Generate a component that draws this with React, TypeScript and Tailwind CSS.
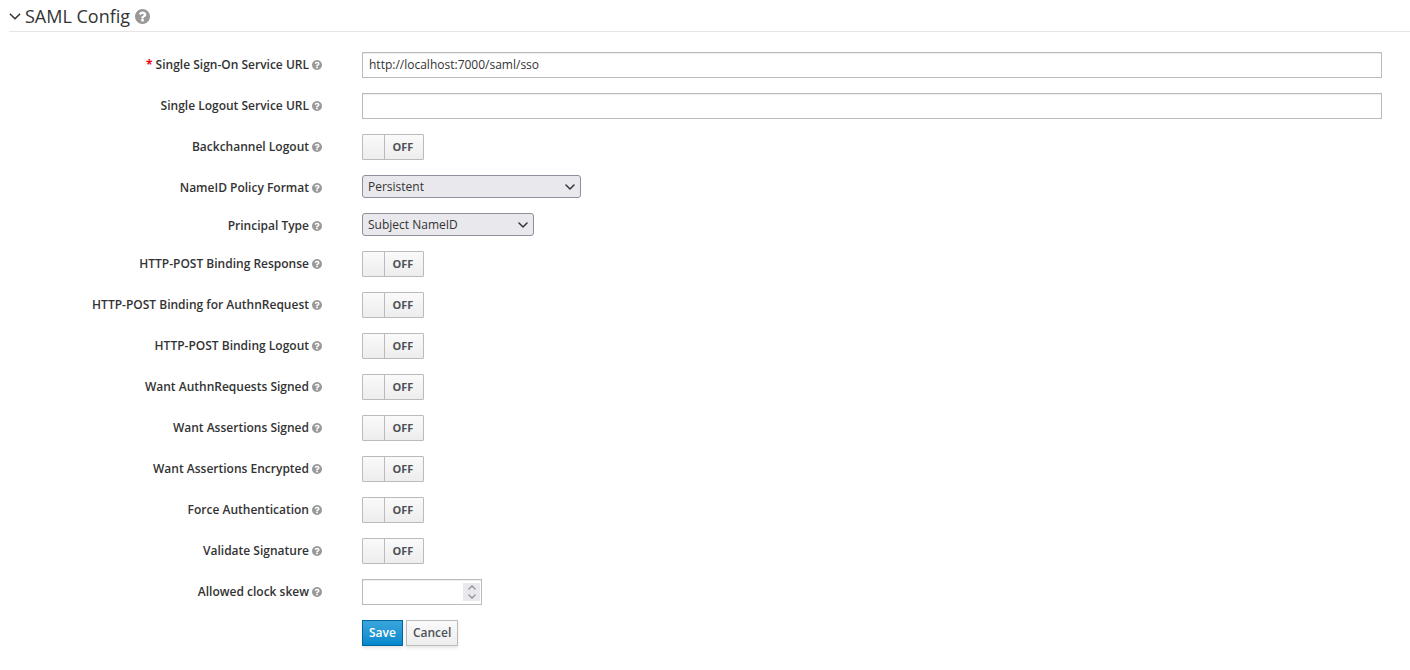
import { useState } from 'react'
import type { ReactNode } from 'react'

const SWITCHES = [
  { id: 'postBindingResponse', label: 'HTTP-POST Binding Response' },
  { id: 'postBindingAuthnRequest', label: 'HTTP-POST Binding for AuthnRequest' },
  { id: 'postBindingLogout', label: 'HTTP-POST Binding Logout' },
  { id: 'wantAuthnRequestsSigned', label: 'Want AuthnRequests Signed' },
  { id: 'wantAssertionsSigned', label: 'Want Assertions Signed' },
  { id: 'wantAssertionsEncrypted', label: 'Want Assertions Encrypted' },
  { id: 'forceAuthentication', label: 'Force Authentication' },
  { id: 'validateSignature', label: 'Validate Signature' },
]

const NAME_ID_FORMATS = ['Persistent', 'Transient', 'Email', 'Kerberos', 'X.509 Subject Name', 'Unspecified']
const PRINCIPAL_TYPES = ['Subject NameID', 'Attribute [Name]', 'Attribute [Friendly Name]']

function HelpIcon({ className }: { className: string }) {
  return (
    <svg className={`flex-shrink-0 text-[#999999] ${className}`} fill="currentColor" viewBox="128 128 1536 1536" aria-hidden="true">
      <path d="M1024 1376v-192q0-14-9-23t-23-9h-192q-14 0-23 9t-9 23v192q0 14 9 23t23 9h192q14 0 23-9t9-23zm256-672q0-88-55.5-163t-138.5-116-170-41q-243 0-371 213-15 24 8 42l132 100q7 6 19 6 16 0 25-12 53-68 86-92 34-24 86-24 48 0 85.5 26t37.5 59q0 38-20 61t-68 45q-63 28-115.5 86.5t-52.5 125.5v36q0 14 9 23t23 9h192q14 0 23-9t9-23q0-19 21.5-49.5t54.5-49.5q32-18 49-28.5t46-35 44.5-48 28-60.5 12.5-81zm384 192q0 209-103 385.5t-279.5 279.5-385.5 103-385.5-103-279.5-279.5-103-385.5 103-385.5 279.5-279.5 385.5-103 385.5 103 279.5 279.5 103 385.5z" />
    </svg>
  )
}

function Chevron({ className, d = 'M1 1l4 4 4-4', strokeWidth = 1.5 }: { className: string; d?: string; strokeWidth?: number }) {
  return (
    <svg className={className} fill="none" stroke="currentColor" viewBox="0 0 10 6" aria-hidden="true">
      <path strokeLinecap="round" strokeLinejoin="round" strokeWidth={strokeWidth} d={d} />
    </svg>
  )
}

function Field({ id, label, required, children }: { id: string; label: string; required?: boolean; children: ReactNode }) {
  return (
    <div className="flex items-start gap-10">
      <div className="-mb-[3px] flex h-[26px] w-[313px] flex-shrink-0 items-center justify-end gap-[3px]">
        <label htmlFor={id} className="whitespace-nowrap font-semibold">
          {required && <span className="font-bold text-[#ee0011]">* </span>}
          {label}
        </label>
        <HelpIcon className="h-[10px] w-[10px]" />
      </div>
      <div className="flex min-w-0 flex-1">{children}</div>
    </div>
  )
}

function TextInput({ id, defaultValue }: { id: string; defaultValue?: string }) {
  return (
    <input
      id={id}
      type="text"
      defaultValue={defaultValue}
      className="h-[26px] w-full border border-[#bbbbbb] bg-white px-1.5 pb-0.5 shadow-[inset_0_1px_1px_rgba(0,0,0,0.075)]"
    />
  )
}

function Select({ id, options, className }: { id: string; options: string[]; className: string }) {
  return (
    <div className={`relative ${className}`}>
      <select id={id} className="block h-[23px] w-full appearance-none rounded-[3px] border border-[#8f8f9d] bg-[#e9e9ed] pl-[5px] pr-6">
        {options.map(o => <option key={o}>{o}</option>)}
      </select>
      <Chevron className="pointer-events-none absolute right-1.5 top-[9px] h-[6px] w-[10px]" />
    </div>
  )
}

function Switch({ id }: { id: string }) {
  const [on, setOn] = useState(false)
  return (
    <label className={`flex h-[26px] w-[62px] cursor-pointer rounded-[1px] border border-[#bbbbbb] ${on ? 'flex-row-reverse' : ''}`}>
      <input id={id} type="checkbox" checked={on} onChange={e => setOn(e.target.checked)} className="sr-only" />
      <span className={`w-[22px] bg-linear-to-b from-[#fafafa] to-[#ededed] border-[#bbbbbb] ${on ? 'border-l' : 'border-r'}`} />
      <span className={`flex flex-1 items-center justify-center pr-0.5 text-[11px] font-bold ${on ? 'bg-[#0088ce] text-white' : 'bg-linear-to-b from-[#fafafa] to-[#ededed] text-[#4d5258]'}`}>
        {on ? 'ON' : 'OFF'}
      </span>
    </label>
  )
}

function ClockSkew({ id }: { id: string }) {
  const [value, setValue] = useState('')
  const step = (n: number) => setValue(v => String(Number(v) + n))
  return (
    <div className="flex h-[26px] w-[120px] items-center border border-[#bbbbbb] bg-white pr-px shadow-[inset_0_1px_1px_rgba(0,0,0,0.075)]">
      <input
        id={id}
        type="number"
        value={value}
        onChange={e => setValue(e.target.value)}
        className="h-full min-w-0 flex-1 px-1.5 outline-none [appearance:textfield] [&::-webkit-inner-spin-button]:appearance-none"
      />
      <div className="flex h-[18px] w-[17px] flex-col bg-[#e9e9ed] text-[#84848f]">
        <button type="button" aria-label="Increase" onClick={() => step(1)} className="flex flex-1 items-center justify-center">
          <Chevron className="h-[5px] w-[8px]" d="M1 5l4-4 4 4" />
        </button>
        <button type="button" aria-label="Decrease" onClick={() => step(-1)} className="flex flex-1 items-center justify-center">
          <Chevron className="h-[5px] w-[8px]" />
        </button>
      </div>
    </div>
  )
}

export default function App() {
  const [open, setOpen] = useState(true)

  return (
    <main className="min-h-screen bg-white pl-[9px] font-['Open_Sans',sans-serif] text-[12px] leading-5 text-[#333333]">
      <h2 className="flex h-8 items-center gap-[5px] border-b border-[#e5e5e5] pt-px text-[18px]">
        <button type="button" aria-expanded={open} onClick={() => setOpen(!open)} className="flex items-center gap-1">
          <Chevron className="h-[7px] w-3" strokeWidth={1.3} />
          SAML Config
        </button>
        <HelpIcon className="h-[15px] w-[15px]" />
      </h2>

      {open && (
        <form className="flex flex-col gap-[15px] pr-7 pt-5" onSubmit={e => e.preventDefault()}>
          <Field id="ssoUrl" label="Single Sign-On Service URL" required>
            <TextInput id="ssoUrl" defaultValue="http://localhost:7000/saml/sso" />
          </Field>
          <Field id="logoutUrl" label="Single Logout Service URL">
            <TextInput id="logoutUrl" />
          </Field>
          <Field id="backchannelLogout" label="Backchannel Logout">
            <Switch id="backchannelLogout" />
          </Field>
          <Field id="nameIdFormat" label="NameID Policy Format">
            <Select id="nameIdFormat" options={NAME_ID_FORMATS} className="w-[219px]" />
          </Field>
          <Field id="principalType" label="Principal Type">
            <Select id="principalType" options={PRINCIPAL_TYPES} className="w-[172px]" />
          </Field>
          {SWITCHES.map(s => (
            <Field key={s.id} id={s.id} label={s.label}>
              <Switch id={s.id} />
            </Field>
          ))}
          <Field id="clockSkew" label="Allowed clock skew">
            <ClockSkew id="clockSkew" />
          </Field>

          <div className="flex gap-[3px] pl-[353px]">
            <button type="submit" className="h-[26px] border border-[#00659c] bg-linear-to-b from-[#39a5dc] to-[#0088ce] px-1.5 font-semibold text-white shadow-[0_2px_3px_rgba(3,3,3,0.1)]">
              Save
            </button>
            <button type="button" className="h-[26px] border border-[#bbbbbb] bg-linear-to-b from-[#fafafa] to-[#ededed] px-1.5 font-semibold text-[#4d5258] shadow-[0_2px_3px_rgba(3,3,3,0.1)]">
              Cancel
            </button>
          </div>
        </form>
      )}
    </main>
  )
}
